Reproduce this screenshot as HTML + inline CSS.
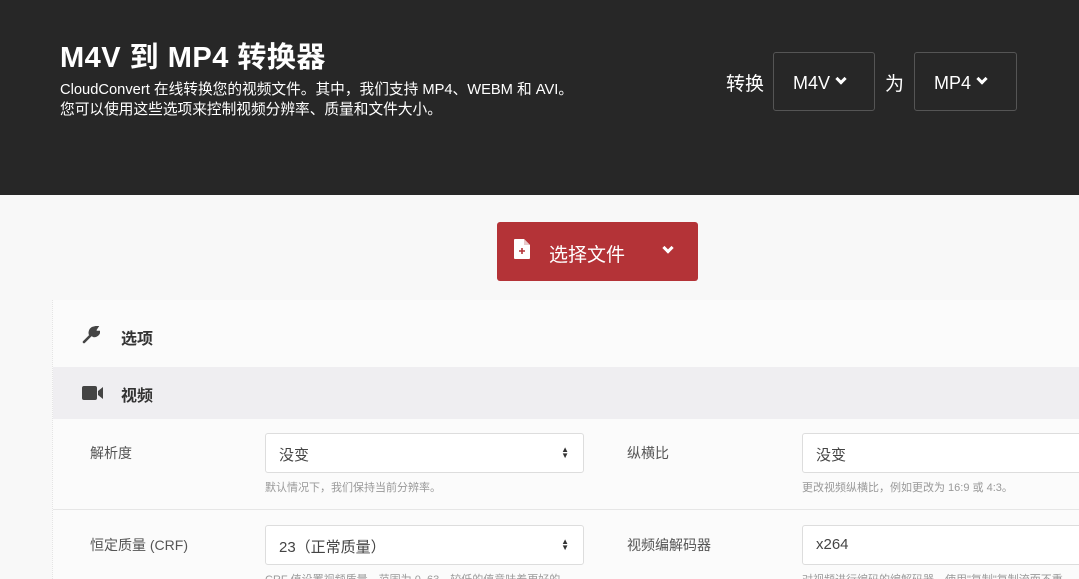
<!DOCTYPE html>
<html><head><meta charset="utf-8"><style>
*{box-sizing:border-box;margin:0;padding:0}
html,body{width:1079px;height:579px;overflow:hidden}
body{background:#f8f8f8;font-family:"Liberation Sans","Noto Sans CJK SC",sans-serif;position:relative}
.hdr{position:absolute;left:0;top:0;width:1079px;height:195px;background:#272727}
.h1{position:absolute;left:60px;top:34px;color:#fff;font-size:29px;font-weight:bold;letter-spacing:0.5px}
.sub{position:absolute;left:60px;top:80px;color:#fff;font-size:14.7px;line-height:20px}
.lbl{position:absolute;color:#fff;font-size:19px}
.sel{position:absolute;top:52px;height:59px;border:1px solid #555;border-radius:3px;color:#fff;font-size:18px;padding-top:20px;padding-left:19px}
.chev{display:inline-block;width:8px;height:8px;border-right:3px solid #fff;border-bottom:3px solid #fff;transform:rotate(45deg);margin-left:7px;vertical-align:6px}
.btn{position:absolute;left:497px;top:222px;width:201px;height:59px;background:#b43337;border-radius:3px;color:#fff;font-size:19px}
.panel{position:absolute;left:52px;top:300px;width:1030px;height:279px;background:#fbfbfb;border-left:1px dotted #e4e4e4}
.row{position:absolute;left:0;width:1030px}
.t{position:absolute;font-size:16px;color:#333;font-weight:bold}
.fl{position:absolute;font-size:14px;color:#555}
.inp{position:absolute;height:40px;background:#fff;border:1px solid #ddd;border-radius:3px;font-size:15px;color:#444;padding:10px 13px}
.hint{position:absolute;font-size:11px;color:#999}
.ud{position:absolute;right:14px;top:13px;font-size:8px;line-height:6px;color:#333}
</style></head><body>
<div class="hdr">
 <div class="h1">M4V 到 MP4 转换器</div>
 <div class="sub">CloudConvert 在线转换您的视频文件。其中，我们支持 MP4、WEBM 和 AVI。<br>您可以使用这些选项来控制视频分辨率、质量和文件大小。</div>
 <div class="lbl" style="left:726px;top:69px">转换</div>
 <div class="sel" style="left:773px;width:102px">M4V<span class="chev"></span></div>
 <div class="lbl" style="left:885px;top:69px">为</div>
 <div class="sel" style="left:914px;width:103px">MP4<span class="chev"></span></div>
</div>
<div class="btn">
 <svg style="position:absolute;left:17px;top:17px" width="16" height="20" viewBox="0 0 16 20"><path d="M0 1Q0 0 1 0H10L16 6V19Q16 20 15 20H1Q0 20 0 19Z" fill="#fff"/><path d="M10 0V6H16" fill="#e8c9ca"/><path d="M8 9V15M5 12H11" stroke="#b43337" stroke-width="1.6"/></svg>
 <span style="position:absolute;left:52px;top:18px">选择文件</span>
 <span class="chev" style="position:absolute;left:167px;top:22px;margin:0"></span>
</div>
<div class="panel">
 <div class="row" style="top:8px;height:56px">
  <svg style="position:absolute;left:29px;top:18px" width="18" height="18" viewBox="0 0 18 18"><path d="M2 16L10 8M11 2a5 5 0 0 0-3 6l4 2a5 5 0 0 0 5-4l-3 0-1-2 2-3z" stroke="#444" stroke-width="2.6" fill="#444" stroke-linecap="round"/></svg>
  <div class="t" style="left:68px;top:17px">选项</div>
 </div>
 <div class="row" style="top:67px;height:52px;background:#efeef1">
  <svg style="position:absolute;left:29px;top:19px" width="22" height="14" viewBox="0 0 22 14"><rect x="0" y="0" width="15" height="14" rx="2" fill="#444"/><path d="M16 5L21 1V13L16 9Z" fill="#444"/></svg>
  <div class="t" style="left:68px;top:15px">视频</div>
 </div>
 <div class="row" style="top:119px;height:91px;border-bottom:1px solid #e6e6e6">
  <div class="fl" style="left:37px;top:24px">解析度</div>
  <div class="inp" style="left:212px;top:14px;width:319px">没变<div class="ud">▲<br>▼</div></div>
  <div class="hint" style="left:212px;top:60px">默认情况下，我们保持当前分辨率。</div>
  <div class="fl" style="left:574px;top:24px">纵横比</div>
  <div class="inp" style="left:749px;top:14px;width:300px">没变</div>
  <div class="hint" style="left:749px;top:60px">更改视频纵横比，例如更改为 16:9 或 4:3。</div>
 </div>
 <div class="row" style="top:211px;height:90px">
  <div class="fl" style="left:37px;top:24px">恒定质量 (CRF)</div>
  <div class="inp" style="left:212px;top:14px;width:319px">23（正常质量）<div class="ud">▲<br>▼</div></div>
  <div class="hint" style="left:212px;top:60px">CRF 值设置视频质量，范围为 0–63。较低的值意味着更好的</div>
  <div class="fl" style="left:574px;top:24px">视频编解码器</div>
  <div class="inp" style="left:749px;top:14px;width:300px">x264</div>
  <div class="hint" style="left:749px;top:60px">对视频进行编码的编解码器。使用"复制"复制流而不重</div>
 </div>
</div>
</body></html>
